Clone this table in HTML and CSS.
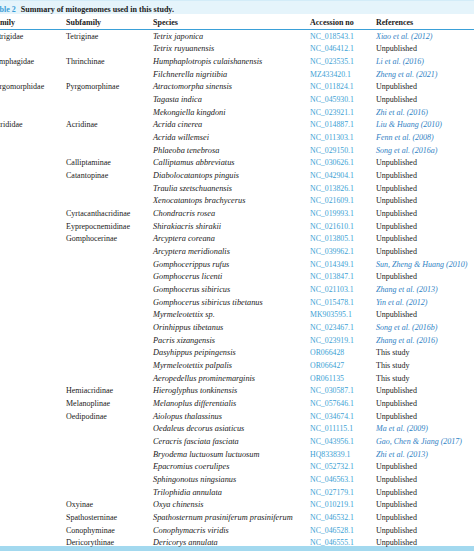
FILE: index.html
```html
<!DOCTYPE html>
<html lang="en">
<head>
<meta charset="utf-8">
<title>Table 2 Summary of mitogenomes used in this study.</title>
<link rel="stylesheet" href="styles.css">
</head>
<body>
<div class="page">
  <div class="caption"><span class="label">Table 2</span><span class="title">Summary of mitogenomes used in this study.</span></div>
  <div class="row head"><span>Family</span><span>Subfamily</span><span>Species</span><span>Accession no</span><span>References</span></div>
  <div class="body">
    <div class="row"><span>Tetrigidae</span><span>Tetriginae</span><i>Tetrix japonica</i><span class="acc">NC_018543.1</span><i class="ref">Xiao et al. (2012)</i></div>
    <div class="row"><span></span><span></span><i>Tetrix ruyuanensis</i><span class="acc">NC_046412.1</span><span>Unpublished</span></div>
    <div class="row"><span>Pamphagidae</span><span>Thrinchinae</span><i>Humphaplotropis culaishanensis</i><span class="acc">NC_023535.1</span><i class="ref">Li et al. (2016)</i></div>
    <div class="row"><span></span><span></span><i>Filchnerella nigritibia</i><span class="acc">MZ433420.1</span><i class="ref">Zheng et al. (2021)</i></div>
    <div class="row"><span>Pyrgomorphidae</span><span>Pyrgomorphinae</span><i>Atractomorpha sinensis</i><span class="acc">NC_011824.1</span><span>Unpublished</span></div>
    <div class="row"><span></span><span></span><i>Tagasta indica</i><span class="acc">NC_045930.1</span><span>Unpublished</span></div>
    <div class="row"><span></span><span></span><i>Mekongiella kingdoni</i><span class="acc">NC_023921.1</span><i class="ref">Zhi et al. (2016)</i></div>
    <div class="row"><span>Acrididae</span><span>Acridinae</span><i>Acrida cinerea</i><span class="acc">NC_014887.1</span><i class="ref">Liu &amp; Huang (2010)</i></div>
    <div class="row"><span></span><span></span><i>Acrida willemsei</i><span class="acc">NC_011303.1</span><i class="ref">Fenn et al. (2008)</i></div>
    <div class="row"><span></span><span></span><i>Phlaeoba tenebrosa</i><span class="acc">NC_029150.1</span><i class="ref">Song et al. (2016a)</i></div>
    <div class="row"><span></span><span>Calliptaminae</span><i>Calliptamus abbreviatus</i><span class="acc">NC_030626.1</span><span>Unpublished</span></div>
    <div class="row"><span></span><span>Catantopinae</span><i>Diabolocatantops pinguis</i><span class="acc">NC_042904.1</span><span>Unpublished</span></div>
    <div class="row"><span></span><span></span><i>Traulia szetschuanensis</i><span class="acc">NC_013826.1</span><span>Unpublished</span></div>
    <div class="row"><span></span><span></span><i>Xenocatantops brachycerus</i><span class="acc">NC_021609.1</span><span>Unpublished</span></div>
    <div class="row"><span></span><span>Cyrtacanthacridinae</span><i>Chondracris rosea</i><span class="acc">NC_019993.1</span><span>Unpublished</span></div>
    <div class="row"><span></span><span>Eyprepocnemidinae</span><i>Shirakiacris shirakii</i><span class="acc">NC_021610.1</span><span>Unpublished</span></div>
    <div class="row"><span></span><span>Gomphocerinae</span><i>Arcyptera coreana</i><span class="acc">NC_013805.1</span><span>Unpublished</span></div>
    <div class="row"><span></span><span></span><i>Arcyptera meridionalis</i><span class="acc">NC_039962.1</span><span>Unpublished</span></div>
    <div class="row"><span></span><span></span><i>Gomphocerippus rufus</i><span class="acc">NC_014349.1</span><i class="ref">Sun, Zheng &amp; Huang (2010)</i></div>
    <div class="row"><span></span><span></span><i>Gomphocerus licenti</i><span class="acc">NC_013847.1</span><span>Unpublished</span></div>
    <div class="row"><span></span><span></span><i>Gomphocerus sibiricus</i><span class="acc">NC_021103.1</span><i class="ref">Zhang et al. (2013)</i></div>
    <div class="row"><span></span><span></span><i>Gomphocerus sibiricus tibetanus</i><span class="acc">NC_015478.1</span><i class="ref">Yin et al. (2012)</i></div>
    <div class="row"><span></span><span></span><i>Myrmeleotettix sp.</i><span class="acc">MK903595.1</span><span>Unpublished</span></div>
    <div class="row"><span></span><span></span><i>Orinhippus tibetanus</i><span class="acc">NC_023467.1</span><i class="ref">Song et al. (2016b)</i></div>
    <div class="row"><span></span><span></span><i>Pacris xizangensis</i><span class="acc">NC_023919.1</span><i class="ref">Zhang et al. (2016)</i></div>
    <div class="row"><span></span><span></span><i>Dasyhippus peipingensis</i><span class="acc">OR066428</span><span>This study</span></div>
    <div class="row"><span></span><span></span><i>Myrmeleotettix palpalis</i><span class="acc">OR066427</span><span>This study</span></div>
    <div class="row"><span></span><span></span><i>Aeropedellus prominemarginis</i><span class="acc">OR061135</span><span>This study</span></div>
    <div class="row"><span></span><span>Hemiacridinae</span><i>Hieroglyphus tonkinensis</i><span class="acc">NC_030587.1</span><span>Unpublished</span></div>
    <div class="row"><span></span><span>Melanoplinae</span><i>Melanoplus differentialis</i><span class="acc">NC_057646.1</span><span>Unpublished</span></div>
    <div class="row"><span></span><span>Oedipodinae</span><i>Aiolopus thalassinus</i><span class="acc">NC_034674.1</span><span>Unpublished</span></div>
    <div class="row"><span></span><span></span><i>Oedaleus decorus asiaticus</i><span class="acc">NC_011115.1</span><i class="ref">Ma et al. (2009)</i></div>
    <div class="row"><span></span><span></span><i>Ceracris fasciata fasciata</i><span class="acc">NC_043956.1</span><i class="ref">Gao, Chen &amp; Jiang (2017)</i></div>
    <div class="row"><span></span><span></span><i>Bryodema luctuosum luctuosum</i><span class="acc">HQ833839.1</span><i class="ref">Zhi et al. (2013)</i></div>
    <div class="row"><span></span><span></span><i>Epacromius coerulipes</i><span class="acc">NC_052732.1</span><span>Unpublished</span></div>
    <div class="row"><span></span><span></span><i>Sphingonotus ningsianus</i><span class="acc">NC_046563.1</span><span>Unpublished</span></div>
    <div class="row"><span></span><span></span><i>Trilophidia annulata</i><span class="acc">NC_027179.1</span><span>Unpublished</span></div>
    <div class="row"><span></span><span>Oxyinae</span><i>Oxya chinensis</i><span class="acc">NC_010219.1</span><span>Unpublished</span></div>
    <div class="row"><span></span><span>Spathosterninae</span><i>Spathosternum prasiniferum prasiniferum</i><span class="acc">NC_046532.1</span><span>Unpublished</span></div>
    <div class="row"><span></span><span>Conophyminae</span><i>Conophymacris viridis</i><span class="acc">NC_046528.1</span><span>Unpublished</span></div>
    <div class="row last"><span></span><span>Dericorythinae</span><i>Dericorys annulata</i><span class="acc">NC_046555.1</span><span>Unpublished</span></div>
  </div>
  <div class="foot"></div>
</div>
</body>
</html>
```

FILE: styles.css
```css
html, body {
  margin: 0;
  padding: 0;
  background: #ffffff;
  overflow: hidden;
}

.page {
  margin-left: -9px;
  width: 540px;
  font-family: "Liberation Serif", "Times New Roman", serif;
  font-size: 8px;
  color: #1a1a1a;
}

.caption {
  box-sizing: border-box;
  height: 14px;
  padding-top: 3px;
  line-height: 11px;
  background: #e5f4fb;
  border-top: 1px solid #d3ecf8;
  font-weight: bold;
  white-space: nowrap;
}

.caption .label {
  color: #3a9dd6;
  margin-right: 5px;
}

.caption .title {
  color: #1a1a1a;
  font-size: 8.05px;
}

.row {
  display: grid;
  grid-template-columns: 75px 87px 157px 66px 1fr;
  height: 12.68px;
  line-height: 12.68px;
  white-space: nowrap;
}

.row.head {
  box-sizing: content-box;
  height: 12px;
  line-height: 12px;
  padding-top: 3px;
  border-bottom: 1px solid #3aa0d8;
  font-weight: bold;
}

.body {
  padding-top: 0.6px;
}

.row i {
  font-style: italic;
  font-size: 8.3px;
}

.acc {
  color: #3d9fd5;
  font-size: 7.8px;
}

.row i.ref {
  color: #2f82c4;
  font-size: 8px;
}

.row.last {
  height: 9px;
}

.foot {
  height: 6px;
  background: #a3d9ef;
}
```
